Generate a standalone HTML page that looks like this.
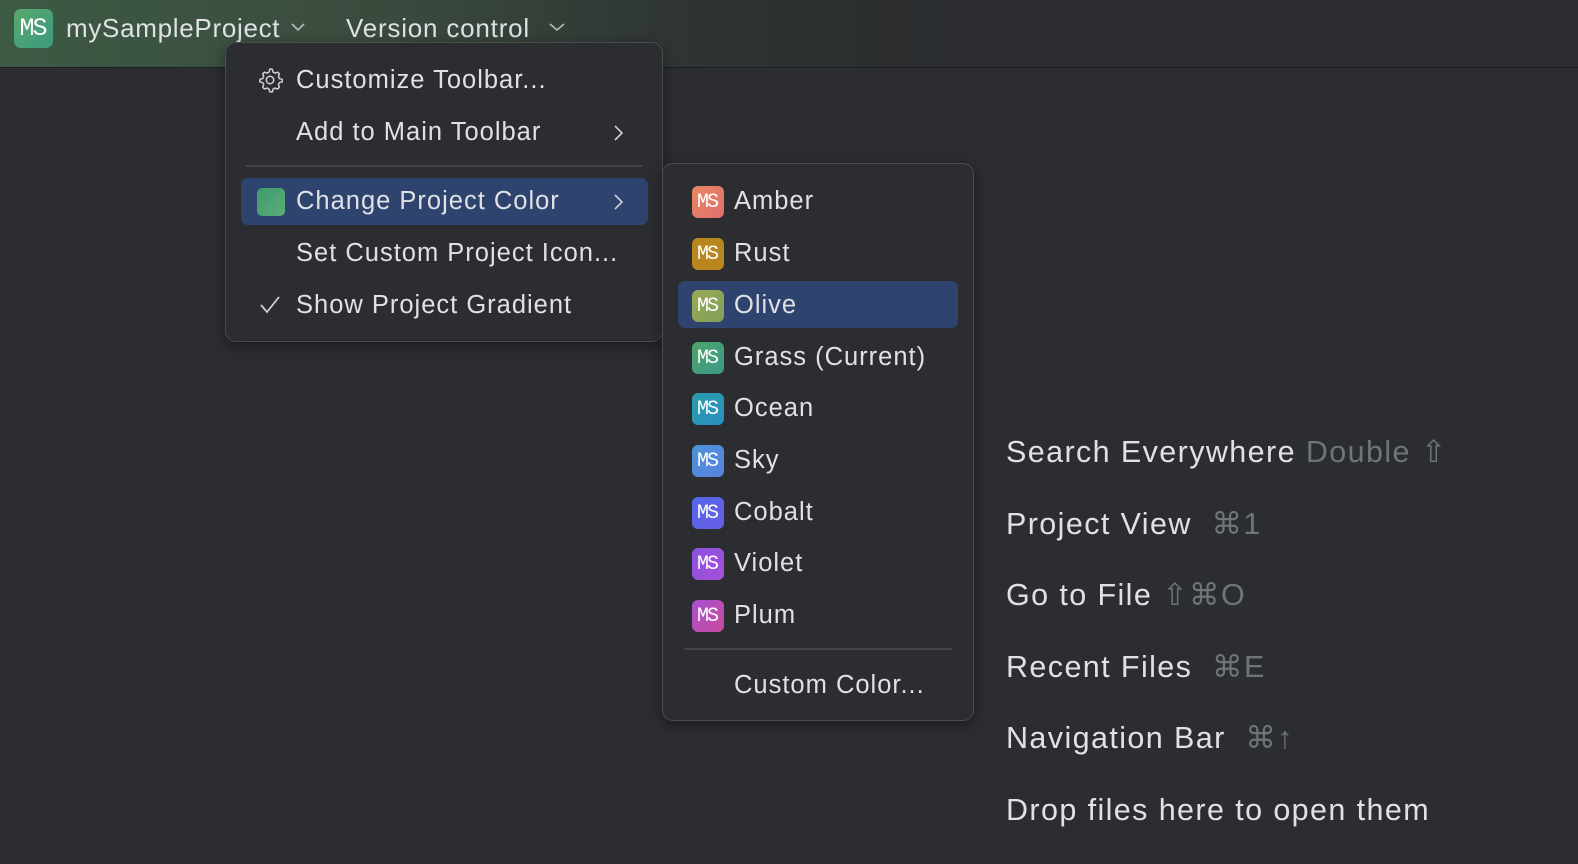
<!DOCTYPE html>
<html><head><meta charset="utf-8"><style>
*{margin:0;padding:0;box-sizing:border-box}
body{width:1578px;height:864px;background:#2b2d30;font-family:"Liberation Sans",sans-serif;color:#dfe1e5;position:relative;overflow:hidden}
.hdr{position:absolute;left:0;top:0;width:1578px;height:68px;background:linear-gradient(90deg,#3d5a44 0%,#3a4a3e 25%,#2e3331 45%,#2b2d30 60%);border-bottom:1px solid #1e1f22}
.t{position:absolute;white-space:nowrap;line-height:1}
.ms{position:absolute;border-radius:6px;color:#fff;font-family:"Liberation Mono",monospace;display:flex;align-items:center;justify-content:center;letter-spacing:-2px;padding-right:2px}
.menu{position:absolute;background:#2b2d30;border:1px solid #4a4c50;border-radius:11px;box-shadow:0 4px 14px rgba(0,0,0,.4)}
.hl{position:absolute;background:#2e436e;border-radius:7px}
.sep{position:absolute;height:2px;background:#43454a}
.mi{font-size:25.5px;letter-spacing:1px;color:#dfe1e5}
.rt{font-size:30.5px;letter-spacing:1.4px;color:#dfe1e5}
.sc{color:#6f737a}
</style></head><body>
<div class="hdr"></div>
<div class="ms" style="left:14px;top:9px;width:39px;height:39px;background:linear-gradient(135deg,#5aa86c,#3c9a80);font-size:25px;border-radius:7px">MS</div>
<div class="t" style="left:66px;top:15px;font-size:26px;letter-spacing:0.7px">mySampleProject</div>
<svg style="position:absolute;left:291px;top:22px" width="14" height="10"><path d="M1 2 L7 8 L13 2" stroke="#bbb" stroke-width="1.6" fill="none"/></svg>
<div class="t" style="left:346px;top:15px;font-size:26px;letter-spacing:0.8px">Version control</div>
<svg style="position:absolute;left:549px;top:22px" width="16" height="10"><path d="M1 2 L8 8 L15 2" stroke="#bbb" stroke-width="1.6" fill="none"/></svg>

<div class="menu" style="left:225px;top:42px;width:438px;height:300px"></div>
<svg style="position:absolute;left:256px;top:66px" width="28" height="28" viewBox="0 0 24 24"><path d="M12 2.5l2 .3.6 2.4 1.6.9 2.4-.8 1.4 1.5-.8 2.4.9 1.6 2.4.6v2.2l-2.4.6-.9 1.6.8 2.4-1.4 1.5-2.4-.8-1.6.9-.6 2.4h-2.2l-.6-2.4-1.6-.9-2.4.8-1.4-1.5.8-2.4-.9-1.6-2.4-.6v-2.2l2.4-.6.9-1.6-.8-2.4 1.4-1.5 2.4.8 1.6-.9.6-2.4z" fill="none" stroke="#ced0d6" stroke-width="1.3" stroke-linejoin="round"/><circle cx="12" cy="12" r="3.2" fill="none" stroke="#ced0d6" stroke-width="1.3"/></svg>
<div class="t mi" style="left:296px;top:68px">Customize Toolbar...</div>
<div class="t mi" style="left:296px;top:120px">Add to Main Toolbar</div>
<svg style="position:absolute;left:613px;top:124px" width="12" height="18"><path d="M2 2 L9 9 L2 16" stroke="#ced0d6" stroke-width="1.6" fill="none"/></svg>
<div class="sep" style="left:246px;top:165px;width:396px"></div>
<div class="hl" style="left:241px;top:178px;width:407px;height:47px"></div>
<div style="position:absolute;left:257px;top:188px;width:28px;height:28px;border-radius:5px;background:linear-gradient(135deg,#3f9a6a,#5aad7a)"></div>
<div class="t mi" style="left:296px;top:189px">Change Project Color</div>
<svg style="position:absolute;left:613px;top:193px" width="12" height="18"><path d="M2 2 L9 9 L2 16" stroke="#ced0d6" stroke-width="1.6" fill="none"/></svg>
<div class="t mi" style="left:296px;top:241px">Set Custom Project Icon...</div>
<svg style="position:absolute;left:258px;top:293px" width="24" height="24"><path d="M3 12 L9 19 L21 4" stroke="#ced0d6" stroke-width="1.8" fill="none"/></svg>
<div class="t mi" style="left:296px;top:293px">Show Project Gradient</div>

<div class="menu" style="left:662px;top:163px;width:312px;height:558px"></div>
<div class="hl" style="left:678px;top:281px;width:280px;height:47px"></div>
<div class="ms" style="left:692px;top:186px;width:32px;height:32px;background:linear-gradient(135deg,#e8875f,#e06f6f);font-size:20px">MS</div>
<div class="t mi" style="left:734px;top:189px">Amber</div>
<div class="ms" style="left:692px;top:238px;width:32px;height:32px;background:#b8861c;font-size:20px">MS</div>
<div class="t mi" style="left:734px;top:241px">Rust</div>
<div class="ms" style="left:692px;top:290px;width:32px;height:32px;background:linear-gradient(135deg,#9aa855,#7fa15a);font-size:20px">MS</div>
<div class="t mi" style="left:734px;top:293px">Olive</div>
<div class="ms" style="left:692px;top:342px;width:32px;height:32px;background:linear-gradient(135deg,#4fa36a,#3b9a85);font-size:20px">MS</div>
<div class="t mi" style="left:734px;top:345px">Grass (Current)</div>
<div class="ms" style="left:692px;top:393px;width:32px;height:32px;background:linear-gradient(135deg,#2a9dac,#2a8fc0);font-size:20px">MS</div>
<div class="t mi" style="left:734px;top:396px">Ocean</div>
<div class="ms" style="left:692px;top:445px;width:32px;height:32px;background:linear-gradient(135deg,#4a95d6,#5a80e0);font-size:20px">MS</div>
<div class="t mi" style="left:734px;top:448px">Sky</div>
<div class="ms" style="left:692px;top:497px;width:32px;height:32px;background:linear-gradient(135deg,#5168e6,#6a5ee6);font-size:20px">MS</div>
<div class="t mi" style="left:734px;top:500px">Cobalt</div>
<div class="ms" style="left:692px;top:548px;width:32px;height:32px;background:linear-gradient(135deg,#8a52e0,#a74fd6);font-size:20px">MS</div>
<div class="t mi" style="left:734px;top:551px">Violet</div>
<div class="ms" style="left:692px;top:600px;width:32px;height:32px;background:linear-gradient(135deg,#a94fd0,#c74c9e);font-size:20px">MS</div>
<div class="t mi" style="left:734px;top:603px">Plum</div>
<div class="sep" style="left:684px;top:648px;width:268px"></div>
<div class="t mi" style="left:734px;top:673px">Custom Color...</div>

<div class="t rt" style="left:1006px;top:437px">Search Everywhere <span class="sc">Double ⇧</span></div>
<div class="t rt" style="left:1006px;top:509px">Project View <span class="sc">&nbsp;⌘1</span></div>
<div class="t rt" style="left:1006px;top:580px">Go to File <span class="sc">⇧⌘O</span></div>
<div class="t rt" style="left:1006px;top:652px">Recent Files <span class="sc">&nbsp;⌘E</span></div>
<div class="t rt" style="left:1006px;top:723px">Navigation Bar <span class="sc">&nbsp;⌘↑</span></div>
<div class="t rt" style="left:1006px;top:795px">Drop files here to open them</div>
</body></html>
